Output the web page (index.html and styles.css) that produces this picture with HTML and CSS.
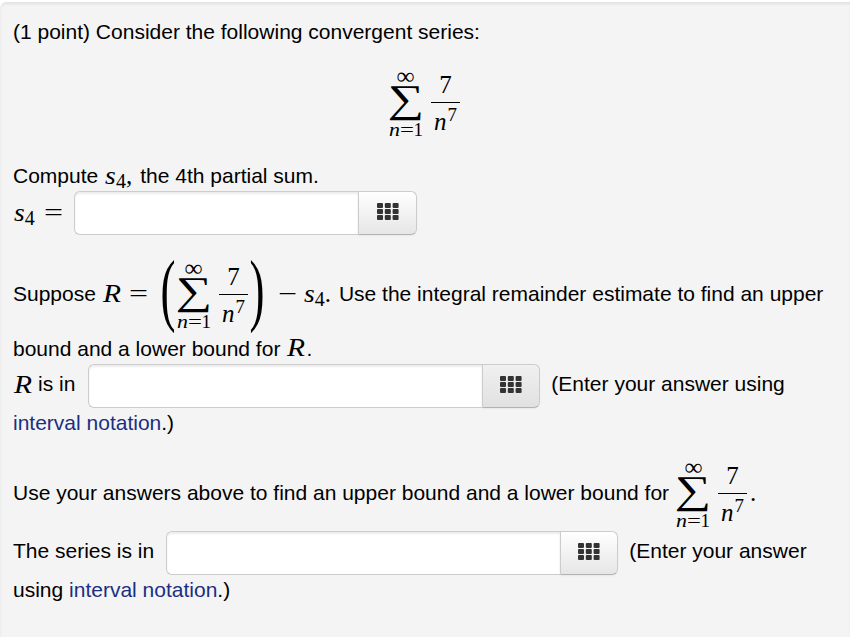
FILE: index.html
```
<!DOCTYPE html>
<html lang="en">
<head>
  <meta charset="UTF-8" />
  <title>Convergent Series</title>
  <link rel="stylesheet" href="styles.css">
</head>
<body>

  <div class="problem">
    <div class="row intro">(1 point) Consider the following convergent series:</div>

    <div class="row display">
      <span class="series">
        <span class="sum"><span class="upper">∞</span><span class="sigma">∑</span><span class="lower"><i>n</i><b>=</b>1</span></span>
        <span class="frac"><span class="num">7</span><span class="den"><i>n</i><sup>7</sup></span></span>
      </span>
    </div>

    <!-- Partial sum -->
    <div class="row">
      <span>Compute</span>
      <span class="math s4"><i>s</i><sub>4</sub>,</span>
      <span class="after-s4">the 4th partial sum.</span>
    </div>
    <div class="row answer">
      <span class="math s4"><i>s</i><sub>4</sub></span>
      <span class="math op">=</span>
      <div class="field short">
        <input type="text" aria-label="answer 1" />
        <button type="button" aria-label="Equation editor">
          <svg width="22" height="18" viewBox="0 0 22 18"><use href="#grid" /></svg>
        </button>
      </div>
    </div>

    <!-- Remainder -->
    <div class="row remainder">
      <span>Suppose</span>
      <span class="math big-r"><i>R</i></span>
      <span class="math op">=</span>
      <span class="paren">(</span>
      <span class="series">
        <span class="sum"><span class="upper">∞</span><span class="sigma">∑</span><span class="lower"><i>n</i><b>=</b>1</span></span>
        <span class="frac"><span class="num">7</span><span class="den"><i>n</i><sup>7</sup></span></span>
      </span>
      <span class="paren right">)</span>
      <span class="math op minus">−</span>
      <span class="math s4"><i>s</i><sub>4</sub>.</span>
      <span class="after-s4">Use the integral remainder estimate to find an upper</span>
    </div>
    <div class="row">
      <span>bound and a lower bound for</span>
      <span class="math big-r last"><i>R</i></span><span>.</span>
    </div>
    <div class="row answer">
      <span class="math big-r first"><i>R</i></span>
      <span class="is-in">is in</span>
      <div class="field">
        <input type="text" aria-label="answer 2" />
        <button type="button" class="active" aria-label="Equation editor">
          <svg width="22" height="18" viewBox="0 0 22 18"><use href="#grid" /></svg>
        </button>
      </div>
      <span class="hint">(Enter your answer using</span>
    </div>
    <div class="row"><a href="#">interval notation</a>.)</div>

    <!-- Bounds for the series -->
    <div class="row bounds">
      <span>Use your answers above to find an upper bound and a lower bound for</span>
      <span class="series">
        <span class="sum"><span class="upper">∞</span><span class="sigma">∑</span><span class="lower"><i>n</i><b>=</b>1</span></span>
        <span class="frac"><span class="num">7</span><span class="den"><i>n</i><sup>7</sup></span></span>
      </span>
      <span class="math stop">.</span>
    </div>
    <div class="row answer">
      <span class="label">The series is in</span>
      <div class="field">
        <input type="text" aria-label="answer 3" />
        <button type="button" class="narrow" aria-label="Equation editor">
          <svg width="22" height="18" viewBox="0 0 22 18"><use href="#grid" /></svg>
        </button>
      </div>
      <span class="hint">(Enter your answer</span>
    </div>
    <div class="row">using&nbsp;<a href="#">interval notation</a>.)</div>
  </div>

  <!-- Shared button icon -->
  <svg class="defs" width="0" height="0">
    <symbol id="grid" viewBox="0 0 22 18">
      <g fill="#333">
        <rect x="0" y="0" width="6" height="5" rx="1" />
        <rect x="7.8" y="0" width="6" height="5" rx="1" />
        <rect x="15.6" y="0" width="6" height="5" rx="1" />
        <rect x="0" y="6" width="6" height="5" rx="1" />
        <rect x="7.8" y="6" width="6" height="5" rx="1" />
        <rect x="15.6" y="6" width="6" height="5" rx="1" />
        <rect x="0" y="12" width="6" height="5" rx="1" />
        <rect x="7.8" y="12" width="6" height="5" rx="1" />
        <rect x="15.6" y="12" width="6" height="5" rx="1" />
      </g>
    </symbol>
  </svg>

</body>
</html>
```
FILE: styles.css
```
* {
  box-sizing: border-box;
}

body {
  margin: 0;
  padding-top: 2px;
  background-color: #fff;
  color: #000;
  font-family: "Liberation Sans", Arial, sans-serif;
  font-size: 21px;
  line-height: 30px;
  overflow: hidden;
}

.problem {
  height: 635px;
  padding-left: 12px;
  background-color: #f4f4f4;
  border-top: 1px solid #e3e3e3;
  border-left: 1px solid #efefef;
  border-radius: 6px 0 0 0;
  box-shadow: inset 0 2px 2px rgba(0, 0, 0, 0.05);
}

.row {
  display: flex;
  align-items: center;
  height: 30px;
  white-space: nowrap;
}

.intro {
  margin-top: 14px;
}

.display {
  height: 76px;
  margin: 17px 0 21px;
  padding-left: 376px;
}

.answer {
  height: 44px;
}

.remainder {
  height: 76px;
  margin-top: 21px;
}

.remainder + .row {
  height: 32px;
  padding-top: 2px;
}

.bounds {
  height: 76px;
  margin: 17px 0 0;
}

a {
  color: #1a2f83;
  text-decoration: none;
}

/* Math */
.math,
.series,
.paren {
  font-family: "Liberation Serif", "Times New Roman", serif;
}

.math {
  font-size: 25px;
}

.s4 {
  margin-left: 7px;
  width: 29px;
}

.s4 i {
  display: inline-block;
  transform: scaleX(1.1);
  transform-origin: left;
}

.s4 sub {
  font-size: 20px;
  line-height: 0;
  vertical-align: -4px;
  margin-left: 1px;
}

.answer .s4 {
  margin-left: 1px;
  width: 22px;
}

.after-s4 {
  margin-left: 6px;
}

.big-r {
  width: 20px;
  margin-left: 7px;
}

.big-r i {
  display: inline-block;
  transform: scaleX(1.18);
  transform-origin: left;
}

.big-r.first {
  width: 19px;
  margin-left: 1px;
  padding-bottom: 3px;
}

.big-r.last {
  width: 19px;
  padding-bottom: 2px;
}

.is-in {
  margin-left: 5px;
  padding-bottom: 4px;
}

.is-in + .field {
  margin-left: 13px;
}

.op {
  width: 17px;
  margin-left: 7px;
  text-align: center;
  transform: scaleX(1.35);
}

.answer .op {
  margin-left: 9px;
}

.series {
  display: flex;
  align-items: center;
  gap: 8px;
  height: 76px;
}

.sum {
  display: grid;
  grid-template-rows: 20px 36px 20px;
  width: 34px;
  height: 76px;
  justify-items: center;
}

.upper {
  font-size: 24px;
  line-height: 24px;
  transform: scaleX(1.06);
}

.sigma {
  font-size: 36px;
  line-height: 36px;
  transform: translateY(-3px) scale(1.42, 1.08);
}

.lower {
  display: flex;
  justify-content: center;
  width: 34px;
  font-size: 19px;
  line-height: 20px;
}

.lower i {
  width: 11px;
  transform: scaleX(1.15);
  transform-origin: left;
}

.lower b {
  width: 14px;
  font-weight: normal;
  text-align: center;
  transform: scaleX(1.3);
}

.frac {
  width: 29px;
  text-align: center;
}

.num {
  display: block;
  height: 33px;
  border-bottom: 1px solid #000;
  font-size: 25px;
  line-height: 30px;
}

.den {
  display: block;
  height: 32px;
  font-size: 25px;
  line-height: 38px;
}

.den sup {
  font-size: 19px;
  line-height: 0;
  vertical-align: 9px;
  margin-left: 1px;
}

.paren {
  width: 14px;
  margin: 0 2px 0 14px;
  font-size: 30px;
  line-height: 42px;
  text-align: center;
  transform: translateY(-5px) scale(1.5, 2.7);
}

.paren.right {
  margin: 0 0 0 2px;
}

.minus {
  margin-left: 15px;
}

.minus + .s4 {
  margin-left: 8px;
}

.stop {
  margin-left: 3px;
}

.bounds .series {
  margin-left: 7px;
}

/* Answer boxes */
.field {
  display: flex;
  width: 452px;
  height: 44px;
  margin-left: 12px;
}

.field.short {
  width: 343px;
}

.field input {
  flex: 1;
  min-width: 0;
  border: 1px solid #ccc;
  border-right: 0;
  border-radius: 6px 0 0 6px;
  background-color: #fff;
  box-shadow: inset 0 2px 2px rgba(0, 0, 0, 0.075);
}

.field button {
  display: flex;
  align-items: center;
  justify-content: center;
  width: 59px;
  padding: 0 0 2px;
  border: 1px solid #ccc;
  border-bottom-color: #b3b3b3;
  border-radius: 0 6px 6px 0;
  background: linear-gradient(#fff, #e6e6e6);
  box-shadow: 0 1px 2px rgba(0, 0, 0, 0.05);
}

.field button.active {
  width: 58px;
  background: linear-gradient(#f0f0f0, #e1e1e1);
}

.field button.narrow {
  width: 58px;
}

.label,
.hint {
  padding-bottom: 4px;
}

.hint {
  margin-left: 11px;
}

.defs {
  display: none;
}
```
